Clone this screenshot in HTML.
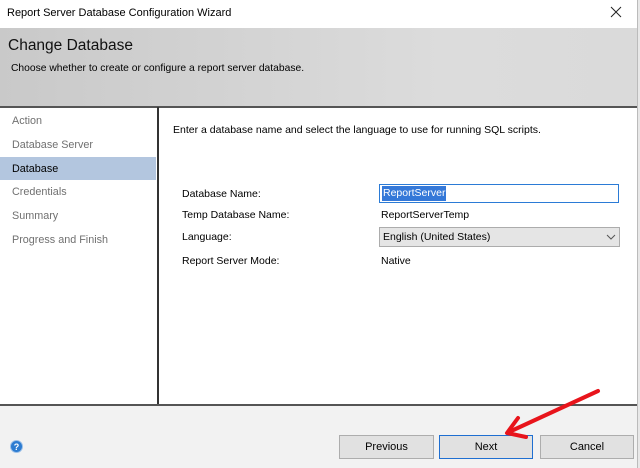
<!DOCTYPE html>
<html><head><style>
body{margin:0;width:640px;height:468px;position:relative;overflow:hidden;background:#fff;font-family:"Liberation Sans",sans-serif;font-size:10.5px;color:#000}
.a{position:absolute}
.nav{left:12px;color:#707070;font-size:10.8px}
.btn{position:absolute;top:435px;width:92px;height:22px;border:1px solid #adadad;background:#e1e1e1;text-align:center;line-height:22px;font-size:11px;box-sizing:content-box}
</style></head><body>
<div class="a" style="left:7px;top:7px;font-size:11px">Report Server Database Configuration Wizard</div>
<svg class="a" style="left:610px;top:6px" width="12" height="12"><path d="M1 1L11 11M11 1L1 11" stroke="#222" stroke-width="1"/></svg>
<div class="a" style="left:0;top:28px;width:637px;height:78px;background:linear-gradient(90deg,#c9c9c9,#dcdcdc 70%,#dadada)"></div>
<div class="a" style="left:8px;top:37px;font-size:15.5px;color:#111">Change Database</div>
<div class="a" style="left:11px;top:63px;font-size:10.3px">Choose whether to create or configure a report server database.</div>
<div class="a" style="left:0;top:106px;width:637px;height:2px;background:#555"></div>
<div class="a" style="left:157px;top:107px;width:2px;height:297px;background:#333"></div>
<div class="a" style="left:0;top:157px;width:156px;height:23px;background:#b3c6df"></div>
<div class="a nav" style="top:115px">Action</div>
<div class="a nav" style="top:139px">Database Server</div>
<div class="a nav" style="top:163px;color:#000">Database</div>
<div class="a nav" style="top:186px">Credentials</div>
<div class="a nav" style="top:210px">Summary</div>
<div class="a nav" style="top:234px">Progress and Finish</div>
<div class="a" style="left:173px;top:124px">Enter a database name and select the language to use for running SQL scripts.</div>
<div class="a" style="left:182px;top:188px">Database Name:</div>
<div class="a" style="left:182px;top:209px">Temp Database Name:</div>
<div class="a" style="left:182px;top:231px">Language:</div>
<div class="a" style="left:182px;top:255px">Report Server Mode:</div>
<div class="a" style="left:379px;top:184px;width:240px;height:19px;border:1px solid #2b7bd6;box-sizing:border-box"></div>
<div class="a" style="left:382px;top:186px;background:#3478d8;color:#fff;padding:0 1px;line-height:15px">ReportServer</div>
<div class="a" style="left:381px;top:209px">ReportServerTemp</div>
<div class="a" style="left:379px;top:227px;width:241px;height:20px;border:1px solid #acacac;background:#e5e5e5;box-sizing:border-box"></div>
<div class="a" style="left:383px;top:231px">English (United States)</div>
<svg class="a" style="left:606px;top:234px" width="10" height="6"><path d="M1 1L5 5L9 1" stroke="#555" fill="none"/></svg>
<div class="a" style="left:381px;top:255px">Native</div>
<div class="a" style="left:0;top:404px;width:637px;height:2px;background:#555"></div>
<div class="a" style="left:0;top:406px;width:637px;height:62px;background:#f2f2f2"></div>
<div class="a" style="left:637px;top:0;width:3px;height:468px;background:#e8e8e8;border-left:1px solid #bbb"></div>
<svg class="a" style="left:10px;top:440px" width="13" height="13"><circle cx="6.5" cy="6.5" r="6" fill="#2d7cd1" stroke="#9cc0e8"/><text x="6.5" y="10" font-size="9" text-anchor="middle" fill="#fff" font-family="Liberation Sans" font-weight="bold">?</text></svg>
<div class="btn" style="left:339px;width:93px">Previous</div>
<div class="btn" style="left:439px;border-color:#1f6fd1">Next</div>
<div class="btn" style="left:540px">Cancel</div>
<svg class="a" style="left:0;top:0" width="640" height="468"><path d="M598 391L509 432" stroke="#e8141b" stroke-width="4" stroke-linecap="round"/><path d="M518 418L507 433L526 437" stroke="#e8141b" stroke-width="4" fill="none" stroke-linecap="round" stroke-linejoin="round"/></svg>
</body></html>
